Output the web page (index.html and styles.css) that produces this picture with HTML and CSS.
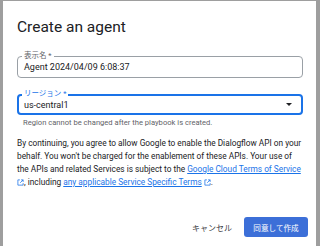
FILE: index.html
```html
<!DOCTYPE html>
<html lang="ja">
<head>
  <meta charset="UTF-8" />
  <meta name="viewport" content="width=device-width, initial-scale=1.0"/>
  <title>Create an agent</title>
  <link rel="stylesheet" href="styles.css">
</head>
<body>
  <div class="dialog">
    <h1 class="title">Create an agent</h1>

    <div class="field">
      <span class="field-label">表示名 *</span>
      <div class="field-value">Agent 2024/04/09 6:08:37</div>
    </div>

    <div class="field field-focused">
      <span class="field-label">リージョン *</span>
      <div class="field-value">us-central1</div>
      <span class="select-arrow"></span>
    </div>
    <div class="hint">Region cannot be changed after the playbook is created.</div>

    <p class="terms">
      By continuing, you agree to allow Google to enable the Dialogflow API on your<br>
      behalf. You won't be charged for the enablement of these APIs. Your use of<br>
      the APIs and related Services is subject to the
      <a href="#">Google Cloud Terms of Service</a><br><svg class="ext" viewBox="0 0 12 12"><path d="M5 1.5H1.5v9h9V7M7 1.5h3.5V5M10.5 1.5L5.5 6.5" fill="none" stroke="currentColor" stroke-width="1.3"/></svg>, including
      <a href="#">any applicable Service Specific Terms</a>
      <svg class="ext" viewBox="0 0 12 12"><path d="M5 1.5H1.5v9h9V7M7 1.5h3.5V5M10.5 1.5L5.5 6.5" fill="none" stroke="currentColor" stroke-width="1.3"/></svg>.
    </p>

    <div class="actions">
      <button class="btn btn-text">キャンセル</button>
      <button class="btn btn-primary">同意して作成</button>
    </div>
  </div>
</body>
</html>
```
FILE: styles.css
```css
* { margin: 0; padding: 0; box-sizing: border-box; }

body {
  background: #9e9e9e;
  font-family: Roboto, "Noto Sans CJK JP", sans-serif;
  color: #202124;
  height: 246px;
  overflow: hidden;
}

.dialog {
  margin: 1px 4px 0 3px;
  height: 245px;
  background: #fff;
  padding: 17px 10px 0 14px;
}

.title {
  font-size: 15.5px;
  font-weight: 400;
  line-height: 18px;
  margin-bottom: 20px;
}

.field {
  position: relative;
  height: 22px;
  width: 286px;
  border: 1px solid #9aa0a6;
  border-radius: 4px;
  padding: 0 6px;
  display: flex;
  align-items: center;
}

.field-focused {
  margin-top: 16px;
  height: 21px;
  border: 2px solid #1a73e8;
  padding: 0 5px;
}

.field-label {
  position: absolute;
  top: -6px;
  left: 4px;
  padding: 0 2px;
  background: #fff;
  font-size: 7.5px;
  line-height: 10px;
  color: #5f6368;
}

.field-focused .field-label {
  left: 3px;
  top: -7px;
  color: #1a73e8;
}

.field-value {
  font-size: 9px;
  flex: 1;
}

.select-arrow {
  width: 0;
  height: 0;
  border-left: 3px solid transparent;
  border-right: 3px solid transparent;
  border-top: 3px solid #202124;
  margin-right: 4px;
}

.hint {
  font-size: 7.6px;
  color: #5f6368;
  padding: 3px 0 0 6px;
}

.terms {
  margin-top: 10px;
  font-size: 8.3px;
  line-height: 13px;
  color: #202124;
  white-space: nowrap;
}

.terms a {
  color: #1a73e8;
  text-decoration: underline;
}

.ext {
  width: 7px;
  height: 7px;
  color: #1a73e8;
  vertical-align: -0.5px;
}

.actions {
  display: flex;
  justify-content: flex-end;
  align-items: center;
  gap: 2px;
  margin: 28px -2px 0 0;
}

.btn {
  font-family: "Noto Sans CJK JP", sans-serif;
  font-size: 8px;
  border: none;
  border-radius: 3px;
  height: 20px;
  padding: 0 10px;
  cursor: pointer;
}

.btn-text {
  background: none;
  color: #3c4043;
}

.btn-primary {
  background: #3c6fd8;
  color: #fff;
  width: 64px;
  padding: 0;
  font-size: 7.6px;
}
```
